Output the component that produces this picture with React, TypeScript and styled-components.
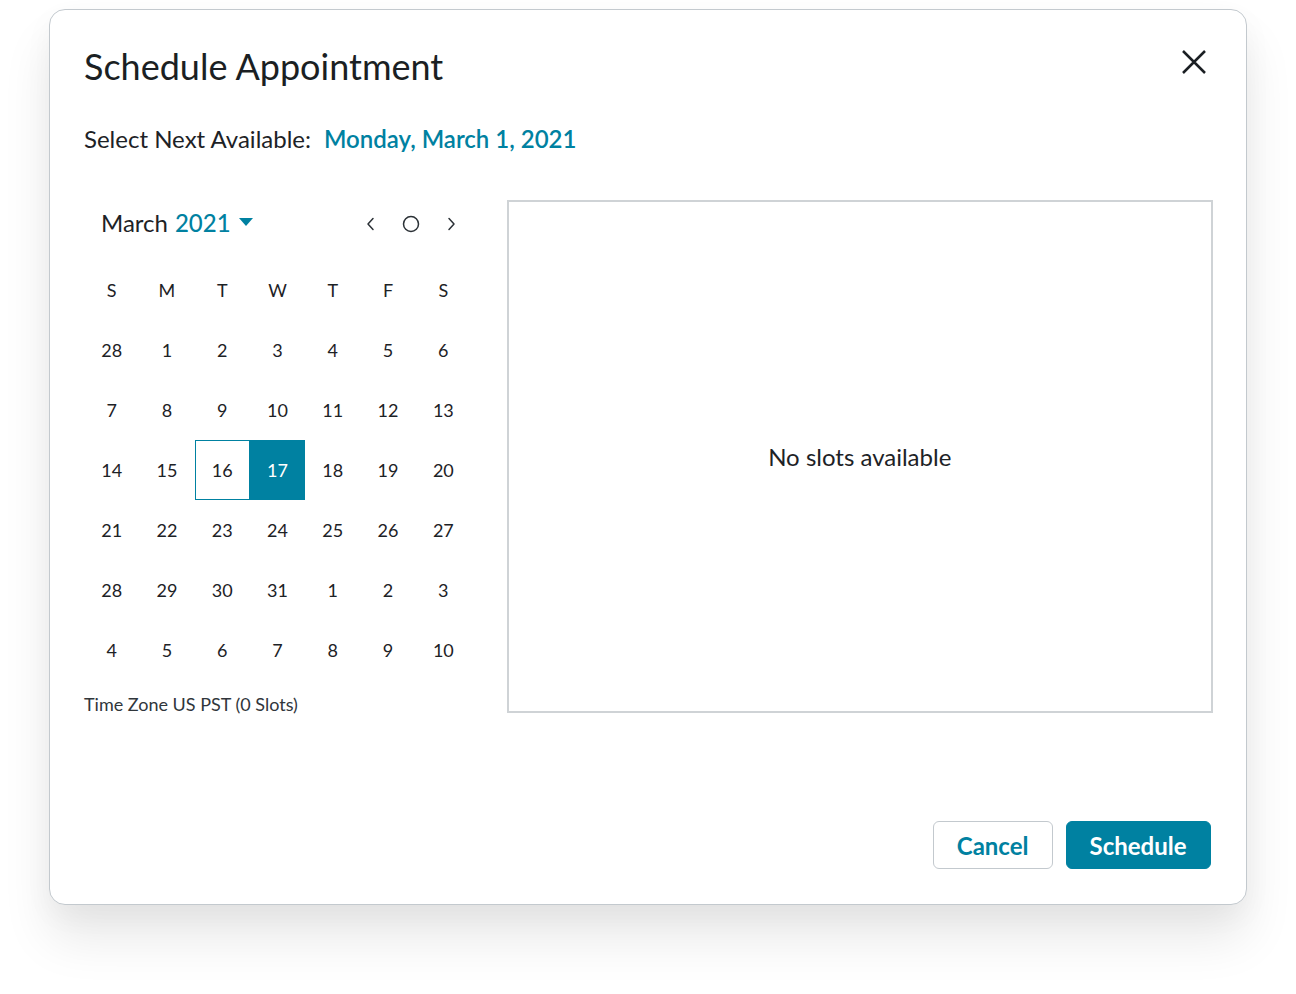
import styled, { createGlobalStyle } from 'styled-components'

const GlobalStyle = createGlobalStyle`
  html, body {
    margin: 0;
    padding: 0;
    background: #ffffff;
  }
  body {
    font-family: Lato, 'Noto Sans', sans-serif;
    color: #1d2226;
  }
`

const TEAL = '#0081a1'

const Page = styled.div`
  width: 1296px;
  height: 994px;
  padding-top: 9px;
  box-sizing: border-box;
`

const Modal = styled.div`
  width: 1198px;
  height: 896px;
  margin: 0 auto;
  box-sizing: border-box;
  background: #fff;
  border: 1.5px solid #c3c9ce;
  border-radius: 16px;
  box-shadow: 0 34px 50px rgba(0, 0, 0, 0.09), 0 10px 30px rgba(0, 0, 0, 0.04);
  padding: 34px 33.5px 35px 34px;
  display: flex;
  flex-direction: column;
`

const Header = styled.div`
  display: flex;
  align-items: center;
  justify-content: space-between;
`

const Title = styled.h1`
  margin: 0;
  font-size: 36px;
  font-weight: 400;
  line-height: 44px;
  color: #1b1f23;
`

const CloseButton = styled.button`
  border: none;
  background: none;
  padding: 0;
  width: 24px;
  height: 24px;
  margin-right: 7px;
  margin-top: -8px;
  cursor: pointer;
  display: flex;
`

const NextAvailable = styled.div`
  margin-top: 36px;
  display: flex;
  align-items: baseline;
  gap: 13px;
  font-size: 24px;
  line-height: 29px;
`

const NextLink = styled.span`
  color: ${TEAL};
  font-weight: 600;
`

const Body = styled.div`
  margin-top: 47px;
  display: flex;
  gap: 36px;
  align-items: stretch;
`

const CalendarColumn = styled.div`
  width: 387px;
  flex-shrink: 0;
  display: flex;
  flex-direction: column;
`

const CalendarHeader = styled.div`
  height: 48px;
  margin-bottom: 12px;
  display: flex;
  align-items: center;
  justify-content: space-between;
  padding: 0 11px 0 17px;
`

const MonthLabel = styled.div`
  display: flex;
  align-items: center;
  font-size: 24px;
  gap: 7px;
  margin-top: -3px;
`

const Year = styled.span`
  color: ${TEAL};
  font-weight: 500;
`

const Caret = styled.span`
  width: 0;
  height: 0;
  border-left: 7.5px solid transparent;
  border-right: 7.5px solid transparent;
  border-top: 8px solid ${TEAL};
  margin-left: 1px;
  margin-top: -2px;
`

const NavGroup = styled.div`
  display: flex;
  align-items: center;
  gap: 22px;
`

const NavButton = styled.button`
  border: none;
  background: none;
  padding: 0;
  width: 18px;
  height: 18px;
  display: flex;
  align-items: center;
  justify-content: center;
  cursor: pointer;
`

const DayGrid = styled.div`
  display: grid;
  grid-template-columns: repeat(7, 1fr);
  grid-auto-rows: 60px;
`

const DayCell = styled.div<{ $state?: 'today' | 'selected' }>`
  display: flex;
  align-items: center;
  justify-content: center;
  font-size: 18px;
  box-sizing: border-box;
  color: ${({ $state }) => ($state === 'selected' ? '#fff' : '#1d2226')};
  background: ${({ $state }) => ($state === 'selected' ? TEAL : 'transparent')};
  border: ${({ $state }) => ($state === 'today' ? `1.5px solid ${TEAL}` : 'none')};
`

const TimeZone = styled.div`
  margin-top: 13px;
  font-size: 18px;
  line-height: 22px;
  color: #30363b;
`

const SlotsPanel = styled.div`
  flex: 1;
  height: 513px;
  box-sizing: border-box;
  border: 2px solid #cfd3d6;
  display: flex;
  align-items: center;
  justify-content: center;
  font-size: 24px;
`

const Footer = styled.div`
  margin-top: auto;
  display: flex;
  justify-content: flex-end;
  gap: 13px;
  padding-top: 1px;
  padding-right: 2px;
`

const Button = styled.button<{ $primary?: boolean }>`
  height: 48px;
  box-sizing: border-box;
  padding: 0 23px;
  border-radius: 6px;
  font-family: Lato, 'Noto Sans', sans-serif;
  font-size: 24px;
  font-weight: 700;
  cursor: pointer;
  color: ${({ $primary }) => ($primary ? '#fff' : TEAL)};
  background: ${({ $primary }) => ($primary ? TEAL : '#fff')};
  border: 1.5px solid ${({ $primary }) => ($primary ? TEAL : '#c3c9ce')};
`

const weekdays = ['S', 'M', 'T', 'W', 'T', 'F', 'S']
const days = [
  28, 1, 2, 3, 4, 5, 6,
  7, 8, 9, 10, 11, 12, 13,
  14, 15, 16, 17, 18, 19, 20,
  21, 22, 23, 24, 25, 26, 27,
  28, 29, 30, 31, 1, 2, 3,
  4, 5, 6, 7, 8, 9, 10,
]

function ChevronLeft() {
  return (
    <svg width="10" height="14" viewBox="0 0 10 14" fill="none">
      <path d="M7 1.5L2 7l5 5.5" stroke="#2b3136" strokeWidth="1.5" strokeLinecap="round" strokeLinejoin="round" />
    </svg>
  )
}

function ChevronRight() {
  return (
    <svg width="10" height="14" viewBox="0 0 10 14" fill="none">
      <path d="M3 1.5L8 7l-5 5.5" stroke="#2b3136" strokeWidth="1.5" strokeLinecap="round" strokeLinejoin="round" />
    </svg>
  )
}

function TodayCircle() {
  return (
    <svg width="18" height="18" viewBox="0 0 18 18" fill="none">
      <circle cx="9" cy="9" r="7.5" stroke="#2b3136" strokeWidth="1.5" />
    </svg>
  )
}

export default function App() {
  return (
    <Page>
      <GlobalStyle />
      <Modal>
        <Header>
          <Title>Schedule Appointment</Title>
          <CloseButton aria-label="Close">
            <svg width="24" height="24" viewBox="0 0 24 24" fill="none">
              <path d="M1 1l22 22M23 1L1 23" stroke="#1b1f23" strokeWidth="2.5" />
            </svg>
          </CloseButton>
        </Header>

        <NextAvailable>
          <span>Select Next Available:</span>
          <NextLink>Monday, March 1, 2021</NextLink>
        </NextAvailable>

        <Body>
          <CalendarColumn>
            <CalendarHeader>
              <MonthLabel>
                <span>March</span>
                <Year>2021</Year>
                <Caret />
              </MonthLabel>
              <NavGroup>
                <NavButton aria-label="Previous month">
                  <ChevronLeft />
                </NavButton>
                <NavButton aria-label="Today">
                  <TodayCircle />
                </NavButton>
                <NavButton aria-label="Next month">
                  <ChevronRight />
                </NavButton>
              </NavGroup>
            </CalendarHeader>
            <DayGrid>
              {weekdays.map((d, i) => (
                <DayCell key={`w${i}`}>{d}</DayCell>
              ))}
              {days.map((d, i) => (
                <DayCell key={i} $state={i === 16 ? 'today' : i === 17 ? 'selected' : undefined}>
                  {d}
                </DayCell>
              ))}
            </DayGrid>
            <TimeZone>Time Zone US PST (0 Slots)</TimeZone>
          </CalendarColumn>

          <SlotsPanel>No slots available</SlotsPanel>
        </Body>

        <Footer>
          <Button>Cancel</Button>
          <Button $primary>Schedule</Button>
        </Footer>
      </Modal>
    </Page>
  )
}
